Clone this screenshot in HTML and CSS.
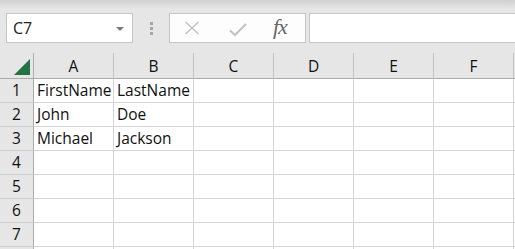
FILE: index.html
```html
<!DOCTYPE html>
<html lang="en">

<head>
    <meta charset="UTF-8">
    <title>Sheet1</title>
    <link rel="stylesheet" href="styles.css">
</head>

<body>

<div class="toolbar">
    <div class="name-box">
        <span>C7</span>
        <span class="caret"></span>
    </div>
    <div class="grip">
        <span></span><span></span><span></span>
    </div>
    <div class="fx-buttons">
        <svg class="icon" width="16" height="14" viewBox="0 0 16 14">
            <path d="M1.5 1 L14.5 13 M14.5 1 L1.5 13" stroke="#c3c3c3" stroke-width="1.6" fill="none"/>
        </svg>
        <svg class="icon" width="18" height="14" viewBox="0 0 18 14">
            <path d="M1 7.5 L6 12 L17 1" stroke="#c3c3c3" stroke-width="2.2" fill="none"/>
        </svg>
        <span class="fx">fx</span>
    </div>
    <div class="formula"></div>
</div>

<div class="sheet" id="sheet">
    <!-- cells are filled in below -->
</div>

<script>
    const cols = ['A', 'B', 'C', 'D', 'E', 'F', ''];
    const data = [
        ['FirstName', 'LastName'],
        ['John', 'Doe'],
        ['Michael', 'Jackson']
    ];
    const sheet = document.getElementById('sheet');

    // header row
    let html = '<div class="corner"><span class="tri"></span></div>';
    cols.forEach(c => {
        html += `<div class="col-head">${c}</div>`;
    });

    // body rows (row 8 only peeks in at the bottom edge)
    for (let r = 1; r <= 8; r++) {
        html += `<div class="row-head">${r < 8 ? r : ''}</div>`;
        cols.forEach((c, i) => {
            const row = data[r - 1] || [];
            html += `<div class="cell">${row[i] || ''}</div>`;
        });
    }
    sheet.innerHTML = html;
</script>

</body>
</html>
```

FILE: styles.css
```css
body {
    margin: 0;
    font-family: "Open Sans", Arial, sans-serif;
    background: #e6e6e6;
    width: 515px;
    height: 249px;
    overflow: hidden;
}

.toolbar {
    display: flex;
    align-items: center;
    height: 53px;
    box-sizing: border-box;
    padding: 13px 0 10px 6px;
    background: linear-gradient(#d0d0d0, #e6e6e6 9px);
}

.name-box {
    width: 127px;
    height: 30px;
    box-sizing: border-box;
    border: 1px solid #c6c6c6;
    background: #fff;
    display: flex;
    align-items: center;
    justify-content: space-between;
    padding: 0 8px 0 6px;
    font-size: 16px;
    color: #222;
}

.caret {
    width: 0;
    height: 0;
    border-left: 4px solid transparent;
    border-right: 4px solid transparent;
    border-top: 4px solid #777;
    margin-top: 1px;
}

.grip {
    display: flex;
    flex-direction: column;
    gap: 2px;
    margin: 0 16px 0 17px;
}

.grip span {
    width: 3px;
    height: 3px;
    background: #a6a6a6;
}

.fx-buttons {
    width: 137px;
    height: 30px;
    box-sizing: border-box;
    border: 1px solid #c6c6c6;
    background: #fdfdfd;
    display: flex;
    align-items: center;
    padding-left: 14px;
}

.fx-buttons .icon {
    margin-right: 29px;
}

.fx-buttons .icon + .icon {
    margin-top: 3px;
    margin-right: 26px;
}

.fx {
    font-family: "Liberation Serif", "Times New Roman", serif;
    font-style: italic;
    font-size: 22px;
    color: #666;
    letter-spacing: -1px;
    margin-top: -3px;
}

.formula {
    flex: 1;
    height: 30px;
    margin-left: 3px;
    box-sizing: border-box;
    border: 1px solid #c6c6c6;
    border-right: none;
    background: #fff;
}

.sheet {
    display: grid;
    grid-template-columns: 34px repeat(6, 80px) 1fr;
    grid-template-rows: 26px;
    grid-auto-rows: 24px;
    font-size: 15.5px;
    color: #111;
}

.sheet div {
    box-sizing: border-box;
}

.corner {
    background: #e6e6e6;
    border-right: 1px solid #ababab;
    border-bottom: 1px solid #ababab;
    position: relative;
}

.tri {
    position: absolute;
    right: 3px;
    bottom: 3px;
    width: 0;
    height: 0;
    border-left: 16px solid transparent;
    border-bottom: 16px solid #217346;
}

.col-head {
    background: #e6e6e6;
    border-right: 1px solid #c4c4c4;
    border-bottom: 1px solid #ababab;
    text-align: center;
    line-height: 25px;
    padding-top: 1px;
}

.row-head {
    background: #e6e6e6;
    border-right: 1px solid #ababab;
    border-bottom: 1px solid #cfcfcf;
    text-align: center;
    line-height: 23px;
}

.cell {
    background: #fff;
    border-right: 1px solid #d4d4d4;
    border-bottom: 1px solid #d4d4d4;
    padding-left: 3px;
    line-height: 23px;
    white-space: nowrap;
    overflow: hidden;
}
```
